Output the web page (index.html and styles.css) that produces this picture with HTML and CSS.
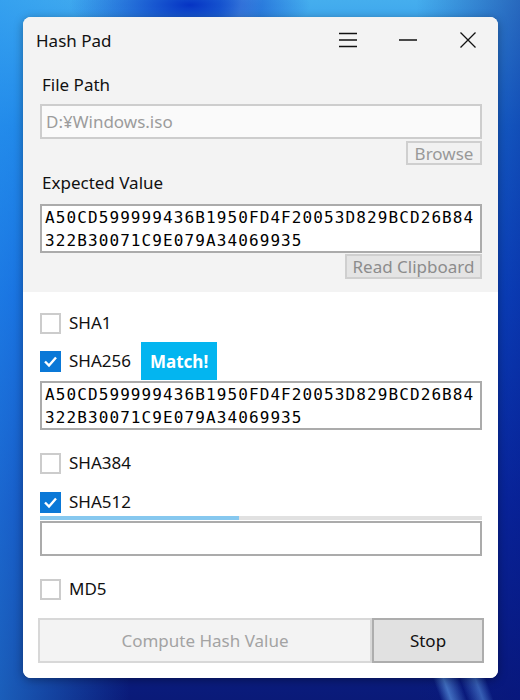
FILE: index.html
```html
<!DOCTYPE html>
<html>
<head>
<meta charset="utf-8">
<link rel="stylesheet" href="styles.css">
</head>
<body>
<div class="window">
  <div class="top">
    <div class="titlebar">
      <span class="title">Hash Pad</span>
      <div class="caption">
        <div class="cbtn"><svg width="20" height="16" viewBox="0 0 20 16"><path d="M1 1.5H19M1 8H19M1 14.5H19" stroke="#111" stroke-width="1.4" fill="none"/></svg></div>
        <div class="cbtn"><svg width="20" height="16" viewBox="0 0 20 16"><path d="M1 8H19" stroke="#111" stroke-width="1.6" fill="none"/></svg></div>
        <div class="cbtn"><svg width="18" height="18" viewBox="0 0 18 18"><path d="M1.5 1.5L16.5 16.5M16.5 1.5L1.5 16.5" stroke="#111" stroke-width="1.3" fill="none"/></svg></div>
      </div>
    </div>
    <div class="label first">File Path</div>
    <div class="input path">D:¥Windows.iso</div>
    <div class="btnrow"><div class="btn browse">Browse</div></div>
    <div class="label exp">Expected Value</div>
    <div class="area">A50CD599999436B1950FD4F20053D829BCD26B84<br>322B30071C9E079A34069935</div>
    <div class="btnrow"><div class="btn clip">Read Clipboard</div></div>
  </div>
  <div class="bottom">
    <div class="check r1"><span class="box"></span><span>SHA1</span></div>
    <div class="check r2"><span class="box on"><svg width="21" height="21" viewBox="0 0 21 21"><path d="M5 10.5L9 14.5L16 6.5" stroke="#fff" stroke-width="2.4" fill="none"/></svg></span><span>SHA256</span><span class="match">Match!</span></div>
    <div class="area result">A50CD599999436B1950FD4F20053D829BCD26B84<br>322B30071C9E079A34069935</div>
    <div class="check r3"><span class="box"></span><span>SHA384</span></div>
    <div class="check r4"><span class="box on"><svg width="21" height="21" viewBox="0 0 21 21"><path d="M5 10.5L9 14.5L16 6.5" stroke="#fff" stroke-width="2.4" fill="none"/></svg></span><span>SHA512</span></div>
    <div class="progress"><div class="fill" style="width:45%"></div></div>
    <div class="input empty"></div>
    <div class="check r5"><span class="box"></span><span>MD5</span></div>
    <div class="actions">
      <div class="abtn compute">Compute Hash Value</div>
      <div class="abtn stop">Stop</div>
    </div>
  </div>
</div>
</body>
</html>
```

FILE: styles.css
```css
* { box-sizing: border-box; }
html, body { margin: 0; padding: 0; }
body {
  width: 520px;
  height: 700px;
  overflow: hidden;
  padding: 17px 22px 22px 23px;
  font-family: "Noto Sans", "Open Sans", sans-serif;
  color: #1a1a1a;
  background:
    radial-gradient(ellipse 120px 40px at 190px 5px, #0533c4 0%, rgba(5,51,196,0) 100%),
    linear-gradient(100deg, rgba(255,255,255,0) 42%, rgba(160,225,255,0.45) 46%, rgba(255,255,255,0) 50%) top / 100% 30px no-repeat,
    linear-gradient(70deg, rgba(255,255,255,0) 83%, rgba(110,180,250,0.55) 85%, rgba(255,255,255,0) 88%, rgba(110,180,250,0.45) 91%, rgba(255,255,255,0) 93%) bottom / 100% 30px no-repeat,
    linear-gradient(90deg, rgba(40,150,240,0.55) 0%, rgba(40,150,240,0) 25%, rgba(40,150,240,0) 80%, rgba(5,20,130,0.45) 100%),
    linear-gradient(180deg, #45aeee 0%, #1c7ee4 18%, #0d55d4 42%, #0a2ca6 72%, #0a1a78 100%);
}
.window {
  width: 475px;
  height: 661px;
  border-radius: 8px;
  overflow: hidden;
  background: #fff;
  box-shadow: 0 2px 10px rgba(0,0,0,0.35);
  display: flex;
  flex-direction: column;
}
.top {
  background: #f3f3f3;
  padding: 0 16px 13px 17px;
  display: flex;
  flex-direction: column;
}
.titlebar {
  height: 46px;
  margin: 0 -16px 0 -17px;
  display: flex;
  align-items: center;
  justify-content: space-between;
}
.title {
  padding-left: 13px;
  font-size: 17px;
  color: #111;
}
.caption { display: flex; }
.cbtn {
  width: 60px;
  height: 46px;
  display: flex;
  align-items: center;
  justify-content: center;
}
.label {
  height: 24px;
  line-height: 24px;
  font-size: 17px;
  padding-left: 2px;
  color: #111;
}
.label.first { margin-top: 10px; }
.label.exp { margin-top: 6px; }
.input {
  height: 35px;
  border: 2px solid #cdcdcd;
  background: #fafafa;
  font-size: 17px;
  line-height: 31px;
  padding-left: 4px;
  color: #9c9c9c;
}
.input.path { margin-top: 7px; }
.btnrow { display: flex; justify-content: flex-end; }
.btn {
  border: 2px solid #cfcfcf;
  font-size: 17px;
  color: #999;
  display: flex;
  align-items: center;
  justify-content: center;
}
.browse {
  margin-top: 2px;
  width: 76px;
  height: 24px;
  background: #f1f1f1;
}
.clip {
  margin-top: 1px;
  width: 137px;
  height: 25px;
  background: #e4e4e4;
  color: #8c8c8c;
}
.area {
  margin-top: 9px;
  height: 49px;
  border: 2px solid #ababab;
  background: #fff;
  font-family: "DejaVu Sans Mono", monospace;
  font-size: 16px;
  letter-spacing: 1.1px;
  line-height: 23px;
  padding-left: 3px;
  color: #000;
  white-space: nowrap;
  overflow: hidden;
}
.bottom {
  flex: 1;
  background: #fff;
  padding: 0 16px 0 17px;
  display: flex;
  flex-direction: column;
}
.check {
  display: flex;
  align-items: center;
  gap: 8px;
  font-size: 17px;
  color: #111;
  height: 21px;
}
.check span:nth-child(2) { position: relative; top: -1px; }
.box {
  width: 21px;
  height: 21px;
  border: 2px solid #cccccc;
  background: #fff;
  flex: none;
  display: flex;
}
.box.on {
  border: none;
  background: #0a78d7;
}
.r1 { margin-top: 21px; }
.r2 { margin-top: 8px; height: 38px; }
.match {
  align-self: stretch;
  background: #03b5f0;
  color: #fff;
  font-weight: 700;
  font-size: 17px;
  padding: 0 9px;
  margin-left: 2px;
  display: flex;
  align-items: center;
}
.area.result { margin-top: 1px; }
.r3 { margin-top: 23px; }
.r4 { margin-top: 18px; }
.progress {
  margin-top: 3px;
  height: 4px;
  background: #e1e1e1;
}
.fill { height: 100%; background: #86c8ef; }
.input.empty {
  margin-top: 1px;
  background: #fff;
  border-color: #ababab;
}
.r5 { margin-top: 23px; }
.actions {
  margin: 18px -2px 0 -2px;
  height: 45px;
  display: flex;
}
.abtn {
  display: flex;
  align-items: center;
  justify-content: center;
  font-size: 17px;
  border: 2px solid #d8d8d8;
}
.compute {
  width: 334px;
  background: #f3f3f3;
  color: #a3a3a3;
}
.stop {
  flex: 1;
  background: #e1e1e1;
  border-color: #adadad;
  color: #111;
}
```
